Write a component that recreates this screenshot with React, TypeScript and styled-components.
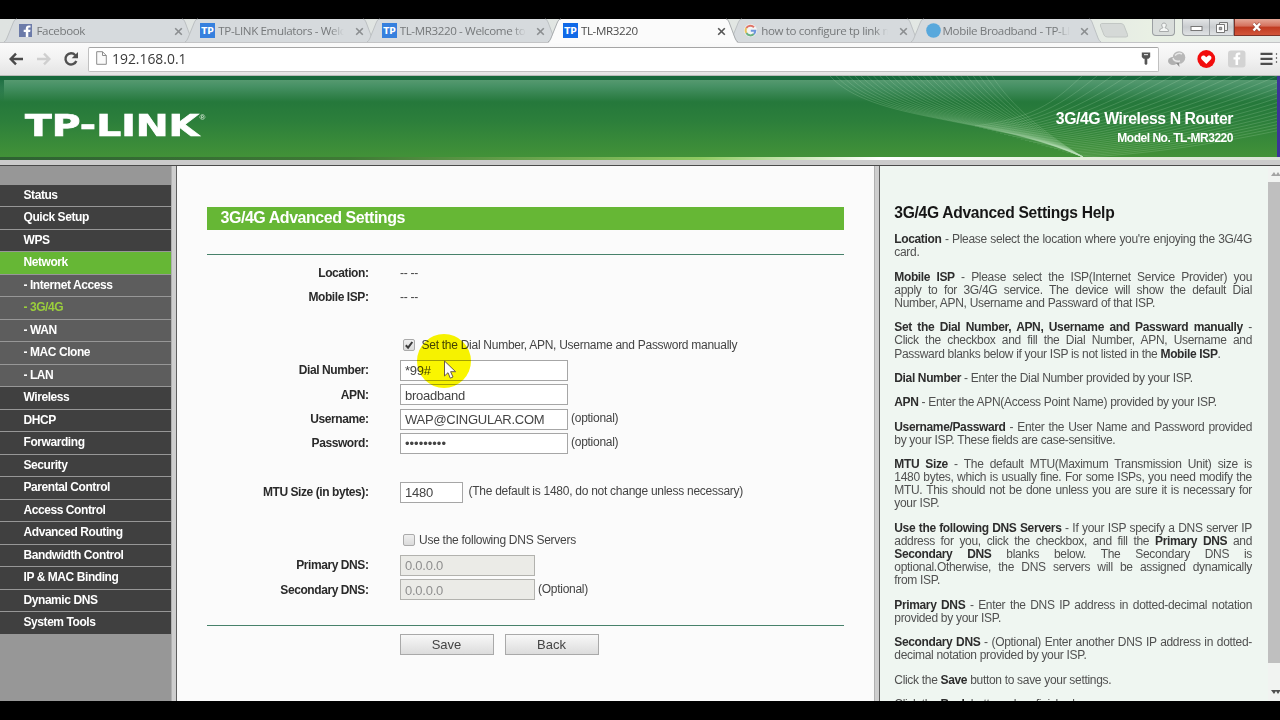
import React from "react";
import styled, { createGlobalStyle, css } from "styled-components";

const GlobalStyle = createGlobalStyle`
  html, body { margin: 0; padding: 0; background: #000; }
  * { box-sizing: border-box; }
`;

const uiFont = `"Open Sans", "Noto Sans", sans-serif`;
const pageFont = `"Liberation Sans", Arial, sans-serif`;

const Screen = styled.div`
  position: relative;
  display: flex;
  flex-direction: column;
  width: 1280px;
  height: 720px;
  padding: 19px 0;
  background: #000;
  overflow: hidden;
  font-family: ${pageFont};
`;

/* ---------- Browser chrome ---------- */

const TabStrip = styled.div`
  display: flex;
  flex: 0 0 23px;
  padding-left: 4px;
  background: linear-gradient(90deg, #dfe3e1 0, #e3e8e4 1080px, #e9f0e4 1150px, #e4e9e6 1280px);
`;

const TabBox = styled.div<{ $active?: boolean }>`
  position: relative;
  z-index: ${(p) => (p.$active ? 2 : 1)};
  display: flex;
  align-items: center;
  flex: 0 0 190px;
  min-width: 0;
  width: 190px;
  height: 23px;
  margin-right: -8.7px;
  padding: 0 11px 0 15px;
  font: 11.6px ${uiFont};
  letter-spacing: -0.38px;
  color: ${(p) => (p.$active ? "#4c4c4c" : "#76797b")};
`;

const TabShape = styled.svg`
  position: absolute;
  inset: 0;
  z-index: -1;
  overflow: visible;
`;

const TabIcon = styled.span<{ $gap: number }>`
  display: flex;
  flex: none;
  margin-right: ${(p) => p.$gap}px;
`;

const TabTitle = styled.span<{ $fade?: boolean }>`
  flex: 1 1 0;
  min-width: 0;
  overflow: hidden;
  white-space: nowrap;
  ${(p) => p.$fade && css`mask-image: linear-gradient(90deg, #000 calc(100% - 14px), transparent);`}
`;

const TabClose = styled.svg`
  flex: 0 0 9px;
  margin: 1px 0.5px 0 10.5px;
`;

const NewTab = styled.svg`
  flex: 0 0 30px;
  margin: 4px 0 0 7px;
`;

const WindowButtons = styled.div`
  display: flex;
  align-items: flex-start;
  margin-left: auto;
`;

const WinButton = styled.span<{ $w: number; $h: number; $kind: "user" | "left" | "mid" | "close" }>`
  display: flex;
  align-items: center;
  justify-content: center;
  width: ${(p) => p.$w}px;
  height: ${(p) => p.$h}px;
  border: 1px solid #9b9fa2;
  border-top: 0;
  background: linear-gradient(#e3e5e6, #c9cccf 50%, #dfe2e4);
  ${(p) => p.$kind === "user" && css`margin-right: 7px; border-radius: 0 0 4px 4px; background: #d9dddb;`}
  ${(p) => p.$kind === "left" && css`border-radius: 0 0 0 4px; border-right: 0; padding-top: 2px;`}
  ${(p) => p.$kind === "close" && css`
    border-color: #7e3227;
    border-right: 0;
    padding-right: 1px;
    background: linear-gradient(#e5a797, #d4705c 45%, #c03a20 50%, #d2553a);
  `}
`;

const Toolbar = styled.div`
  display: flex;
  align-items: center;
  flex: 0 0 34px;
  background: linear-gradient(#fafafa, #f2f2f2 50%, #e4e4e4);
  border-top: 1px solid #c3c4c6;
  border-bottom: 1px solid #b9bdb9;
`;

const NavIcons = styled.svg`
  flex: 0 0 88px;
`;

const AddressBar = styled.div`
  display: flex;
  align-items: center;
  flex: 0 0 1071px;
  height: 25px;
  padding: 0 7px 2px 7px;
  background: #fff;
  border: 1px solid #c0c0c0;
  border-top-color: #a5a5a5;
  border-radius: 2px;
  font: 13.9px ${uiFont};
  color: #3a3a3a;
`;

const Url = styled.span`
  flex: 1;
  padding-left: 5px;
`;

/* ---------- Router page ---------- */

const Banner = styled.header`
  position: relative;
  display: flex;
  justify-content: space-between;
  flex: 0 0 81px;
  overflow: hidden;
  background:
    linear-gradient(#17693c, transparent 26px) 0 0 / 4px 100% no-repeat,
    linear-gradient(#17693c 0, #17693c 4px, #55996f 4px, #479165 10px, #25783b 26px, #2c7f3b 45px, #419138 79px);
  border-right: 3px solid #3c3399;
`;

const Waves = styled.svg`
  position: absolute;
  left: 800px;
  top: 0;
`;

const Logo = styled.svg`
  margin: 33px 0 0 24px;
`;

const Product = styled.div`
  position: relative;
  padding: 33px 44px 0 0;
  text-align: right;
  font-weight: bold;
  color: #fff;
`;

const ProductName = styled.div`
  font-size: 15.8px;
  line-height: 20px;
  letter-spacing: -0.42px;
`;

const ProductModel = styled.div`
  margin-top: 1px;
  font-size: 12px;
  line-height: 16px;
  letter-spacing: -0.47px;
`;

const BannerEdge = styled.div`
  flex: 0 0 9px;
  border-bottom: 1px solid #4a4a4a;
  background:
    linear-gradient(90deg, #2e6132 0, #3f7a35 350px, #8fca62 700px, #ffffff 880px, #e4efdc 1080px, #dbe3d8 1280px) 0 0 / 100% 3px no-repeat,
    #cbcbcb;
`;

const Frames = styled.div`
  display: flex;
  flex: 1 1 0;
  min-height: 0;
`;

const Sidebar = styled.nav`
  flex: 0 0 171px;
  padding-top: 18.7px;
  background: #979797;
`;

const FrameDivider = styled.div`
  flex: 0 0 6px;
  background: #cecece;
  border-left: 1px solid #b0b0b0;
  border-right: 1px solid #5e5e5e;
`;

const MenuItem = styled.div<{ $kind: "top" | "open" | "sub" | "current" }>`
  height: 22.5px;
  padding-left: 23.5px;
  border-bottom: 1.5px solid #979797;
  font-size: 12px;
  font-weight: bold;
  line-height: 20px;
  letter-spacing: -0.43px;
  white-space: nowrap;
  color: ${(p) => (p.$kind === "current" ? "#9bcf3c" : "#fff")};
  background: ${(p) => (p.$kind === "top" ? "#404040" : p.$kind === "open" ? "#66b735" : "#5d5d5d")};
`;

const Main = styled.main`
  flex: 1 1 0;
  padding: 41.4px 30px 0 29.5px;
  background: #fbfbfb;
`;

const SectionTitle = styled.h1`
  height: 22.5px;
  margin: 0 0 24px;
  padding-left: 14px;
  background: #66b735;
  color: #fff;
  font-size: 16px;
  font-weight: bold;
  line-height: 21px;
  letter-spacing: -0.46px;
`;

const Rule = styled.div<{ $gap: number }>`
  height: 1px;
  margin-bottom: ${(p) => p.$gap}px;
  background: #47816a;
`;

const FormRow = styled.div<{ $h?: number }>`
  display: grid;
  grid-template-columns: 162px 1fr;
  column-gap: 31.5px;
  align-items: center;
  height: ${(p) => p.$h ?? 24.375}px;
  font-size: 12px;
  letter-spacing: -0.27px;
  color: #444;
`;

const Label = styled.label`
  text-align: right;
  font-weight: bold;
  letter-spacing: -0.42px;
  color: #2a2a2a;
`;

const Field = styled.div`
  display: flex;
  align-items: center;
  white-space: nowrap;
`;

const TextInput = styled.input<{ $w: number }>`
  width: ${(p) => p.$w}px;
  height: 21px;
  margin: 0;
  padding: 1px 4px 0;
  border: 1px solid #a6a6a6;
  background: #fff;
  font: 13px ${pageFont};
  letter-spacing: -0.25px;
  color: #444;
  &:disabled { background: #ebebe7; color: #8f8f8f; border-color: #b2b2ae; }
  &[type="password"] { letter-spacing: 0; }
`;

const Note = styled.span<{ $gap: number; $inline?: boolean }>`
  margin-left: ${(p) => p.$gap}px;
  padding-bottom: ${(p) => (p.$inline ? 1 : 2)}px;
`;

const CheckSquare = styled.svg`
  margin: 0 0 1px 3px;
`;

const Buttons = styled.div`
  display: flex;
  gap: 11px;
  padding-left: 193px;
`;

const PushButton = styled.button`
  width: 94px;
  height: 21px;
  padding: 0;
  border: 1px solid #a9a9a9;
  background: linear-gradient(#f8f8f8, #dcdcdc);
  font: 13px ${pageFont};
  color: #444;
`;

const Help = styled.aside`
  flex: 0 0 388px;
  padding: 39px 16px 0 14.3px;
  overflow: hidden;
  background: #eff6f1;
  font-size: 12px;
  line-height: 13.1px;
  letter-spacing: -0.31px;
  color: #505050;
  b { color: #2d2d2d; letter-spacing: -0.36px; }
`;

const HelpTitle = styled.h2`
  margin: 0 0 12.3px;
  font-size: 15.6px;
  line-height: 16px;
  letter-spacing: -0.29px;
  color: #161616;
`;

const HelpParagraph = styled.p`
  margin: 0 0 11.3px;
`;

const HelpLine = styled.span<{ $last: boolean }>`
  display: block;
  white-space: ${(p) => (p.$last ? "nowrap" : "normal")};
  text-align-last: ${(p) => (p.$last ? "left" : "justify")};
`;

const ScrollTrack = styled.div`
  display: flex;
  flex-direction: column;
  flex: 0 0 12px;
  padding: 5px 0 6px;
  background: #f1f3f1;
`;

const ScrollThumb = styled.div`
  height: 481px;
  margin: 5px 0 26px;
  background: #bfbfbf;
`;

const Pointer = styled.svg`
  position: absolute;
  left: 417px;
  top: 333px;
`;

const Highlight = styled.div`
  position: absolute;
  left: 417px;
  top: 334px;
  width: 54px;
  height: 54px;
  border-radius: 50%;
  background: #faf600;
  mix-blend-mode: multiply;
`;

/* ---------- Icons ---------- */

const TpIcon = ({ dim }: { dim?: boolean }) => (
  <svg width="15" height="15" viewBox="0 0 15 15">
    <rect width="15" height="15" fill={dim ? "#3680de" : "#116ae8"} />
    <text x="1.3" y="10.6" fontFamily="DejaVu Sans" fontWeight="bold" fontSize="8" fill="#fff" textLength="12.6" lengthAdjust="spacingAndGlyphs" letterSpacing="0">TP</text>
  </svg>
);

const FacebookIcon = () => (
  <svg width="13" height="13" viewBox="0 0 13 13">
    <rect width="13" height="13" fill="#6c7ba9" />
    <path d="M6.800 13V8H4.700V5.800h2.100V4.400c0-2 1.100-3 2.900-3h1.800v2.200h-1.200c-.8 0-1 .3-1 1v1.200h2.200L11.100 8H9.300v5z" fill="#fff" />
  </svg>
);

const GoogleIcon = () => (
  <svg width="13" height="13" viewBox="0 0 13 13">
    <circle cx="6.500" cy="6.500" r="6.500" fill="#f3f4f4" />
    <g fill="none" strokeWidth="2">
      <path d="M2.300 4.100A4.800 4.800 0 0 1 10 3.200" stroke="#df7367" />
      <path d="M2.300 4.100A4.800 4.800 0 0 0 2.400 9" stroke="#e8c25c" />
      <path d="M2.400 9A4.800 4.800 0 0 0 9.800 10.100" stroke="#6bb181" />
      <path d="M9.800 10.100A4.800 4.800 0 0 0 11.300 6.800H6.800" stroke="#6d95dc" />
    </g>
  </svg>
);

const BlueDot = () => (
  <svg width="15" height="15" viewBox="0 0 15 15">
    <circle cx="7.500" cy="7.500" r="7.300" fill="#58a8dc" />
  </svg>
);

const CloseX = ({ dark }: { dark?: boolean }) => (
  <TabClose width="9" height="9" viewBox="0 0 9 9">
    <path d="M1.200 1.200l6.600 6.600M7.800 1.200L1.200 7.800" stroke={dark ? "#555" : "#8b8e90"} strokeWidth="1.600" />
  </TabClose>
);

const UserGlyph = () => (
  <svg width="12" height="11" viewBox="0 0 12 11">
    <path d="M6 1a2.300 2.300 0 0 1 1.300 4.200V6C9.500 6.500 10.500 7.300 10.500 9.500h-9C1.500 7.300 2.500 6.500 4.700 6v-.8A2.300 2.300 0 0 1 6 1z" fill="#f4f6f5" stroke="#a0a4a4" strokeWidth=".9" />
  </svg>
);

const Navigation = () => (
  <NavIcons width="88" height="26" viewBox="0 0 88 26">
    <g fill="none" strokeWidth="2.400">
      <path d="M23 13H11M16 7.700L10.700 13l5.300 5.300" stroke="#4a4a4a" />
      <path d="M37 13h12M44 7.700l5.300 5.300-5.300 5.300" stroke="#cfcfcf" />
      <path d="M75.300 9.200A5.600 5.600 0 1 0 76.300 15" stroke="#505050" />
    </g>
    <path d="M78 6v6.300h-6.300z" fill="#505050" />
  </NavIcons>
);

const PageIcon = () => (
  <svg width="11" height="14" viewBox="0 0 11 14">
    <path d="M.7.700h5.800l3.800 3.800v8.800H.700zM6.500.700v3.800h3.800" fill="#fafafa" stroke="#8c8c8c" />
  </svg>
);

const KeyIcon = () => (
  <svg width="10" height="13" viewBox="0 0 10 13">
    <path d="M.8.500h8.400v4.500L7.500 6.800H6.300V12L5 13l-1.400-1V6.800H2.500L.8 5z" fill="#555" />
    <rect x="3" y="2" width="4" height="1.200" fill="#ddd" />
  </svg>
);

const Extensions = () => (
  <svg width="121" height="26" viewBox="1159 46 121 26">
    <ellipse cx="1173" cy="61" rx="5" ry="4" fill="#b0b0b0" />
    <circle cx="1179" cy="57.500" r="6.300" fill="#b8b8b8" />
    <path d="M1175 55.500q3-3.500 7-1.500M1173 58q1 4 7 3" stroke="#e8e8e8" strokeWidth="1.500" fill="none" />
    <path d="M1176 63l3.500 4-.500-4" fill="#8d8d8d" />
    <circle cx="1206.300" cy="59" r="8.900" fill="#f20d0d" />
    <path d="M1206.300 64l-4.500-4.500c-2-2.200.8-5.200 3.100-3.500l1.400 1.200 1.400-1.200c2.300-1.700 5.100 1.300 3.100 3.500z" fill="#fff" />
    <rect x="1228" y="50.500" width="17.500" height="17" rx="3" fill="#d3d3d3" />
    <path d="M1235.500 65v-5.500h-2v-2.300h2v-1.500c0-2.100 1.200-3.200 3-3.200h1.800v2.300h-1.200c-.8 0-1 .4-1 1.100v1.300h2.100l-.3 2.300h-1.800v5.500z" fill="#fff" />
    <path d="M1260.500 53.800h12M1260.500 58.800h12M1260.500 63.800h12" stroke="#4d4d4d" strokeWidth="2.200" />
    <path d="M1276.500 53v12" stroke="#777" strokeWidth="1.200" strokeDasharray="2 2" />
  </svg>
);

const BannerWaves = () => {
  const falling = Array.from({ length: 27 }, (_, i) => {
    const t = i / 26;
    return `M${30 + t * 162} 0C${72 + t * 140} ${46 - t * 16} ${185 + t * 57} ${39 + t * 17} 283 81`;
  });
  const rising = Array.from({ length: 27 }, (_, i) => {
    const t = i / 26;
    return `M${282 + t * 390} 0C${260 + t * 270} ${20 + t * 32} ${240 + t * 130} ${42 + t * 36} ${175 + t * 108} ${50 + t * 31}`;
  });
  return (
    <Waves width="477" height="81" viewBox="0 0 477 81">
      <g fill="none" stroke="#c4e8c4" strokeWidth=".9">
        {falling.map((d) => <path key={d} d={d} opacity=".22" />)}
        {rising.map((d) => <path key={d} d={d} opacity=".22" />)}
      </g>
    </Waves>
  );
};

const Checkbox = ({ checked }: { checked?: boolean }) => (
  <CheckSquare width="12" height="12" viewBox="0 0 12 12">
    <defs>
      <linearGradient id="box" x1="0" y1="0" x2="0" y2="1">
        <stop offset="0" stopColor="#f0f0f0" />
        <stop offset="1" stopColor="#dadada" />
      </linearGradient>
    </defs>
    <rect x=".5" y=".5" width="11" height="11" rx="1.500" fill="url(#box)" stroke="#aaa" />
    {checked && <path d="M2.800 6.200l2.300 2.500 4.200-5.700" fill="none" stroke="#3c3c3c" strokeWidth="2" />}
  </CheckSquare>
);

/* ---------- Composition ---------- */

const tabs = [
  { title: "Facebook", icon: <FacebookIcon />, gap: 4.5 },
  { title: "TP-LINK Emulators - Welcome", icon: <TpIcon dim />, gap: 3, fade: true },
  { title: "TL-MR3220 - Welcome to TL", icon: <TpIcon dim />, gap: 3, fade: true },
  { title: "TL-MR3220", icon: <TpIcon />, gap: 3, active: true },
  { title: "how to configure tp link mr3220", icon: <GoogleIcon />, gap: 4, fade: true },
  { title: "Mobile Broadband - TP-LINK", icon: <BlueDot />, gap: 2, fade: true },
];

type TabProps = { title: string; icon: React.ReactNode; gap: number; active?: boolean; fade?: boolean };

const Tab = ({ title, icon, gap, active, fade }: TabProps) => (
  <TabBox $active={active}>
    <TabShape width="190" height="24" viewBox="0 0 190 24">
      <path d={active ? "M0 24Q2 23 3 20L9.500 3Q10.500 0 13 0H178Q180 0 181 3L187 20Q188 23 190 24z" : "M0 23Q2 22 3 19L9.500 3Q10.500 0 13 0H178Q180 0 181 3L187 19Q188 22 190 23z"} fill={active ? "#fbfbfb" : "#d6dadd"} />
      <path d="M0 23Q2 22 3 19L9.500 3Q10.500 0 13 0M178 0Q180 0 181 3L187 19Q188 22 190 23" fill="none" stroke={active ? "#a9acae" : "#bcc0c2"} />
    </TabShape>
    <TabIcon $gap={gap}>{icon}</TabIcon>
    <TabTitle $fade={fade}>{title}</TabTitle>
    <CloseX dark={active} />
  </TabBox>
);

type Kind = "top" | "open" | "sub" | "current";
const menu: [string, Kind][] = [
  ["Status", "top"], ["Quick Setup", "top"], ["WPS", "top"], ["Network", "open"],
  ["- Internet Access", "sub"], ["- 3G/4G", "current"], ["- WAN", "sub"], ["- MAC Clone", "sub"], ["- LAN", "sub"],
  ["Wireless", "top"], ["DHCP", "top"], ["Forwarding", "top"], ["Security", "top"], ["Parental Control", "top"],
  ["Access Control", "top"], ["Advanced Routing", "top"], ["Bandwidth Control", "top"], ["IP & MAC Binding", "top"],
  ["Dynamic DNS", "top"], ["System Tools", "top"],
];

const help: React.ReactNode[][] = [
  [<><b>Location</b> - Please select the location where you're enjoying the 3G/4G</>, "card."],
  [
    <><b>Mobile ISP</b> - Please select the ISP(Internet Service Provider) you</>,
    "apply to for 3G/4G service. The device will show the default Dial",
    "Number, APN, Username and Passward of that ISP.",
  ],
  [
    <><b>Set the Dial Number, APN, Username and Passward manually</b> -</>,
    "Click the checkbox and fill the Dial Number, APN, Username and",
    <>Passward blanks below if your ISP is not listed in the <b>Mobile ISP</b>.</>,
  ],
  [<><b>Dial Number</b> - Enter the Dial Number provided by your ISP.</>],
  [<><b>APN</b> - Enter the APN(Access Point Name) provided by your ISP.</>],
  [<><b>Username/Passward</b> - Enter the User Name and Password provided</>, "by your ISP. These fields are case-sensitive."],
  [
    <><b>MTU Size</b> - The default MTU(Maximum Transmission Unit) size is</>,
    "1480 bytes, which is usually fine. For some ISPs, you need modify the",
    "MTU. This should not be done unless you are sure it is necessary for",
    "your ISP.",
  ],
  [
    <><b>Use the following DNS Servers</b> - If your ISP specify a DNS server IP</>,
    <>address for you, click the checkbox, and fill the <b>Primary DNS</b> and</>,
    <><b>Secondary DNS</b> blanks below. The Secondary DNS is</>,
    "optional.Otherwise, the DNS servers will be assigned dynamically",
    "from ISP.",
  ],
  [<><b>Primary DNS</b> - Enter the DNS IP address in dotted-decimal notation</>, "provided by your ISP."],
  [<><b>Secondary DNS</b> - (Optional) Enter another DNS IP address in dotted-</>, "decimal notation provided by your ISP."],
  [<>Click the <b>Save</b> button to save your settings.</>],
  [<>Click the <b>Back</b> button when finished.</>],
];

export default function App() {
  return (
    <Screen>
      <GlobalStyle />
      <TabStrip>
        {tabs.map((t, i) => <Tab key={i} {...t} />)}
        <NewTab width="30" height="15" viewBox="0 0 30 15">
          <path d="M2.500.500H22q2 0 3 2l3.500 9q.8 2.500-1.500 2.500H8.500q-2.500 0-3.500-2L1.500 3Q1 .500 2.500.500z" fill="#d5d9d7" stroke="#c2c7c4" />
        </NewTab>
        <WindowButtons>
          <WinButton $w={23} $h={17} $kind="user"><UserGlyph /></WinButton>
          <WinButton $w={27} $h={17} $kind="left">
            <svg width="13" height="6" viewBox="0 0 13 6"><rect x="1" y="1.500" width="11" height="4" fill="#fff" stroke="#777" /></svg>
          </WinButton>
          <WinButton $w={25} $h={17} $kind="mid">
            <svg width="12" height="12" viewBox="0 0 12 12">
              <path d="M3.500 1.500h8v8h-8z" fill="#eee" stroke="#777" />
              <path d="M.500 3.500h8v8h-8z" fill="#fff" stroke="#777" />
              <path d="M3.300 6.300h2.400v2.400H3.300z" fill="#aaa" stroke="#777" />
            </svg>
          </WinButton>
          <WinButton $w={46} $h={17} $kind="close">
            <svg width="12" height="10" viewBox="0 0 12 10"><path d="M2.500 1.500l6.500 7M9 1.500l-6.500 7" stroke="#9a4a3d" strokeWidth="3.600" /><path d="M2.500 1.500l6.500 7M9 1.500l-6.500 7" stroke="#fff" strokeWidth="2.400" /></svg>
          </WinButton>
        </WindowButtons>
      </TabStrip>
      <Toolbar>
        <Navigation />
        <AddressBar>
          <PageIcon />
          <Url>192.168.0.1</Url>
          <KeyIcon />
        </AddressBar>
        <Extensions />
      </Toolbar>

      <Banner>
        <BannerWaves />
        <Logo width="190" height="34" viewBox="0 0 190 34">
          <text x="1" y="26.500" fontFamily="DejaVu Sans" fontWeight="bold" fontSize="30" fill="#fff" stroke="#fff" strokeWidth=".7" textLength="174" lengthAdjust="spacingAndGlyphs">TP-LINK</text>
          <text x="175.500" y="11" fontFamily="Liberation Sans" fontWeight="bold" fontSize="8" fill="#cfe4cf">®</text>
        </Logo>
        <Product>
          <ProductName>3G/4G Wireless N Router</ProductName>
          <ProductModel>Model No. TL-MR3220</ProductModel>
        </Product>
      </Banner>
      <BannerEdge />

      <Frames>
        <Sidebar>
          {menu.map(([name, kind]) => <MenuItem key={name} $kind={kind}>{name}</MenuItem>)}
        </Sidebar>
        <FrameDivider />
        <Main>
          <SectionTitle>3G/4G Advanced Settings</SectionTitle>
          <Rule $gap={5.7} />
          <FormRow><Label>Location:</Label><Field>-- --</Field></FormRow>
          <FormRow><Label>Mobile ISP:</Label><Field>-- --</Field></FormRow>
          <FormRow />
          <FormRow>
            <span />
            <Field><Checkbox checked /><Note $gap={6.5} $inline>Set the Dial Number, APN, Username and Password manually</Note></Field>
          </FormRow>
          <FormRow><Label>Dial Number:</Label><Field><TextInput $w={168} defaultValue="*99#" /></Field></FormRow>
          <FormRow><Label>APN:</Label><Field><TextInput $w={168} defaultValue="broadband" /></Field></FormRow>
          <FormRow><Label>Username:</Label><Field><TextInput $w={168} defaultValue="WAP@CINGULAR.COM" /><Note $gap={3}>(optional)</Note></Field></FormRow>
          <FormRow><Label>Password:</Label><Field><TextInput $w={168} type="password" defaultValue="broadband" /><Note $gap={3}>(optional)</Note></Field></FormRow>
          <FormRow />
          <FormRow><Label>MTU Size (in bytes):</Label><Field><TextInput $w={63} defaultValue="1480" /><Note $gap={5.5}>(The default is 1480, do not change unless necessary)</Note></Field></FormRow>
          <FormRow />
          <FormRow>
            <span />
            <Field><Checkbox /><Note $gap={4} $inline>Use the following DNS Servers</Note></Field>
          </FormRow>
          <FormRow><Label>Primary DNS:</Label><Field><TextInput $w={135} disabled defaultValue="0.0.0.0" /></Field></FormRow>
          <FormRow><Label>Secondary DNS:</Label><Field><TextInput $w={135} disabled defaultValue="0.0.0.0" /><Note $gap={3}>(Optional)</Note></Field></FormRow>
          <FormRow $h={23.1} />
          <Rule $gap={7.7} />
          <Buttons>
            <PushButton>Save</PushButton>
            <PushButton>Back</PushButton>
          </Buttons>
        </Main>
        <FrameDivider />
        <Help>
          <HelpTitle>3G/4G Advanced Settings Help</HelpTitle>
          {help.map((lines, i) => (
            <HelpParagraph key={i}>
              {lines.map((line, j) => <HelpLine key={j} $last={j === lines.length - 1}>{line}</HelpLine>)}
            </HelpParagraph>
          ))}
        </Help>
        <ScrollTrack>
          <svg width="12" height="6" viewBox="0 0 12 6"><path d="M3 5l3-4 2 3 2-3 2 3v1z" fill="#a3a3a3" /></svg>
          <ScrollThumb />
          <svg width="12" height="6" viewBox="0 0 12 6"><path d="M3 1l3 4 2-3 2 3 2-3V1z" fill="#505050" /></svg>
        </ScrollTrack>
      </Frames>

      <Highlight />
      <Pointer width="54" height="54" viewBox="0 0 54 54">
        <path d="M27.500 28v15l3.500-3.300 2.300 5.500 2.700-1.200-2.400-5.300h5z" fill="#fff" stroke="#6a5a48" strokeWidth="1" />
      </Pointer>
    </Screen>
  );
}
